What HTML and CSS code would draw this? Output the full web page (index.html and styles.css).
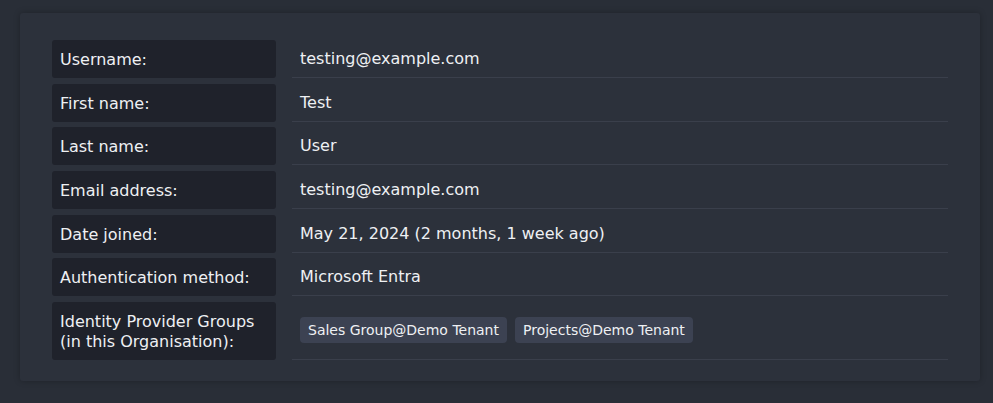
FILE: index.html
```html
<!DOCTYPE html>
<html lang="en">
<head>
<meta charset="utf-8">
<title>User details</title>
<link rel="stylesheet" href="styles.css">
</head>
<body>
<main class="page">
  <section class="card">
    <dl class="details">
      <dt class="label">Username:</dt>
      <dd class="value">testing@example.com</dd>
      <dt class="label">First name:</dt>
      <dd class="value">Test</dd>
      <dt class="label">Last name:</dt>
      <dd class="value">User</dd>
      <dt class="label">Email address:</dt>
      <dd class="value">testing@example.com</dd>
      <dt class="label">Date joined:</dt>
      <dd class="value">May 21, 2024 (2 months, 1 week ago)</dd>
      <dt class="label">Authentication method:</dt>
      <dd class="value">Microsoft Entra</dd>
      <dt class="label">Identity Provider Groups<br>(in this Organisation):</dt>
      <dd class="value tags">
        <span class="tag">Sales Group@Demo Tenant</span>
        <span class="tag">Projects@Demo Tenant</span>
      </dd>
    </dl>
  </section>
</main>
</body>
</html>
```
FILE: styles.css
```css
html, body {
  margin: 0;
  padding: 0;
  background: #292e37;
}
body {
  font-family: "DejaVu Sans", Verdana, sans-serif;
  font-size: 16px;
  color: #eef0f3;
  width: 993px;
  height: 403px;
  overflow: hidden;
}
.page {
  padding: 13px 13px 0 20px;
}
.card {
  width: 960px;
  box-sizing: border-box;
  height: 368px;
  background: #2c313b;
  border-radius: 3px;
  box-shadow: 0 0 6px rgba(0, 0, 0, 0.25);
  padding: 27px 32px 0 32px;
}
.details {
  margin: 0;
  display: grid;
  grid-template-columns: 224px 656px;
  column-gap: 16px;
  row-gap: 5.67px;
}
.label {
  margin: 0;
  background: #1f222b;
  border-radius: 3px;
  padding: 10px 8px 8px;
  line-height: 20px;
  color: #eef0f3;
}
.value {
  margin: 0;
  padding: 1px 8px 0;
  line-height: 20px;
  border-bottom: 1px solid #3a3f4b;
  display: flex;
  align-items: center;
  align-self: stretch;
}
.tags {
  gap: 8px;
  padding-top: 0;
}
.tag {
  background: #3c4252;
  border-radius: 4px;
  padding: 3px 8px;
  font-size: 14px;
  line-height: 20px;
  color: #eef0f3;
}
```
